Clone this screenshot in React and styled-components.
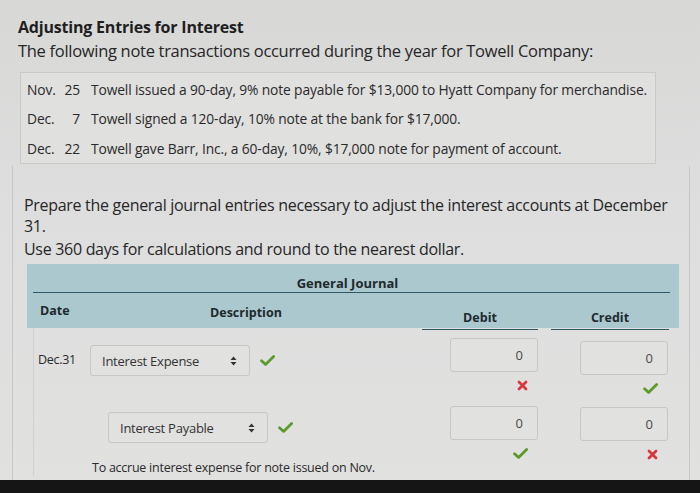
import React from "react";
import styled, { createGlobalStyle } from "styled-components";

const GlobalStyle = createGlobalStyle`
  html, body {
    margin: 0;
    padding: 0;
    background: #dcdcdb;
  }
  body {
    font-family: "Open Sans", "Noto Sans", "Liberation Sans", sans-serif;
    color: #2b2b2b;
  }
`;

const Page = styled.div`
  width: 700px;
  height: 493px;
  overflow: hidden;
  display: flex;
  flex-direction: column;
  background: linear-gradient(180deg, #d8d8d7 0%, #dedede 45%, #e1e1e0 100%);
`;

const Intro = styled.div`
  padding: 17px 0 0 18px;
`;

const Title = styled.h1`
  margin: 0;
  font-size: 16px;
  line-height: 20px;
  font-weight: 700;
  color: #1f1f1f;
  letter-spacing: -0.2px;
`;

const Subtitle = styled.p`
  margin: 3px 0 0;
  font-size: 16.5px;
  line-height: 22px;
  letter-spacing: -0.3px;
  color: #262626;
`;

const NoteBox = styled.div`
  margin: 10px 0 0 2px;
  width: 636px;
  height: 92px;
  border: 1px solid #c9c9c8;
  background: #e0e0df;
  box-sizing: border-box;
  padding-top: 2px;
  display: flex;
  flex-direction: column;
`;

const NoteRow = styled.div`
  display: flex;
  height: 31px;
  align-items: center;
  font-size: 13.8px;
  letter-spacing: -0.13px;
  color: #2a2a2a;
  white-space: nowrap;
`;

const NoteMonth = styled.span`
  width: 32px;
  padding-left: 6px;
`;

const NoteDay = styled.span`
  width: 21px;
  text-align: right;
  margin-right: 11px;
`;

const Panel = styled.div`
  margin: 2px 0 0 12px;
  width: 678px;
  flex: 1;
  min-height: 0;
  overflow: hidden;
  border-left: 1px solid #c6c6c5;
  border-right: 1px solid #c6c6c5;
  box-sizing: border-box;
  display: flex;
  flex-direction: column;
`;

const Question = styled.p`
  margin: 29px 0 0 11px;
  font-size: 16px;
  line-height: 21px;
  letter-spacing: -0.3px;
  color: #262626;
`;

const Hint = styled.p`
  margin: 2px 0 0 11px;
  font-size: 16px;
  line-height: 20px;
  letter-spacing: -0.3px;
  color: #262626;
`;

const JournalHead = styled.div`
  margin: 5px 0 0 14px;
  width: 652px;
  height: 64px;
  background: #abc8cf;
  box-sizing: border-box;
  padding: 10px 9px 0 6px;
  display: flex;
  flex-direction: column;
`;

const JournalTitle = styled.div`
  text-align: center;
  font-size: 13px;
  font-weight: 700;
  line-height: 18px;
  color: #1e2a2c;
  padding-right: 8px;
  border-bottom: 1.5px solid #2d5964;
`;

const ColumnRow = styled.div`
  display: grid;
  grid-template-columns: 56px 333px 116px 131px;
  align-items: end;
  margin-top: 13px;
`;

const ColLabel = styled.div`
  font-size: 12.5px;
  font-weight: 700;
  color: #1e2a2c;
  line-height: 17px;
  padding-left: ${(p) => p.$indent || 0}px;
  text-align: ${(p) => p.$align || "left"};
  border-bottom: ${(p) => (p.$line ? "1.5px solid #2d5964" : "none")};
  margin-left: ${(p) => p.$gap || 0}px;
  padding-bottom: ${(p) => (p.$line ? 3 : 7)}px;
  transform: translateY(${(p) => p.$shift || 0}px);
`;

const Entries = styled.div`
  margin-left: 20px;
  padding-top: 10px;
  display: flex;
  flex-direction: column;
  gap: 11px;
  border-left: 1px solid #d0d0cf;
`;

const EntryRow = styled.div`
  display: grid;
  grid-template-columns: 56px 360px 88px 130px;
  align-items: start;
`;

const DateCell = styled.div`
  font-size: 12.5px;
  letter-spacing: -0.3px;
  padding: 13px 0 0 4px;
  color: #2a2a2a;
`;

const AccountCell = styled.div`
  display: flex;
  align-items: center;
  gap: 10px;
  padding-left: ${(p) => p.$indent || 0}px;
  margin-top: ${(p) => p.$top || 0}px;
`;

const Select = styled.div`
  width: 160px;
  height: 31px;
  box-sizing: border-box;
  border: 1px solid #c6c6c5;
  border-radius: 3px;
  background: #e1e1e0;
  display: flex;
  align-items: center;
  justify-content: space-between;
  padding: 0 12px 0 11px;
  font-size: 13px;
  letter-spacing: -0.25px;
  color: #333;
`;

const AmountCell = styled.div`
  display: flex;
  flex-direction: column;
  align-items: center;
  justify-self: ${(p) => (p.$end ? "end" : "start")};
  width: 88px;
  margin-top: ${(p) => p.$top || 0}px;
`;

const AmountInput = styled.div`
  width: 88px;
  height: 34px;
  box-sizing: border-box;
  border: 1px solid #c6c6c5;
  border-radius: 3px;
  background: #e1e1e0;
  display: flex;
  align-items: center;
  justify-content: flex-end;
  padding-right: 14px;
  font-size: 13px;
  color: #4a4a4a;
`;

const Mark = styled.div`
  align-self: flex-end;
  margin: 6px 10px 0 0;
  height: 14px;
  display: flex;
  align-items: center;
`;

const Memo = styled.div`
  margin-top: -13px;
  padding-left: 58px;
  font-size: 12.5px;
  line-height: 17px;
  letter-spacing: -0.25px;
  color: #2a2a2a;
`;

const BottomBar = styled.div`
  height: 13px;
  flex-shrink: 0;
  background: #151515;
`;

const Check = () => (
  <svg width="15" height="11" viewBox="0 0 15 11">
    <path d="M1.5 5.8 L5.6 9.4 L13.6 1.6" fill="none" stroke="#5c9a2c" strokeWidth="2.8" strokeLinecap="round" strokeLinejoin="round" />
  </svg>
);

const Cross = () => (
  <svg width="11" height="11" viewBox="0 0 11 11">
    <path d="M2 2 L9 9 M9 2 L2 9" fill="none" stroke="#d9363d" strokeWidth="2.8" strokeLinecap="round" />
  </svg>
);

const UpDown = () => (
  <svg width="7" height="10" viewBox="0 0 7 10">
    <path d="M3.5 0.5 L6.5 4 L0.5 4 Z M3.5 9.5 L6.5 6 L0.5 6 Z" fill="#333" />
  </svg>
);

const notes = [
  ["Nov.", "25", "Towell issued a 90-day, 9% note payable for $13,000 to Hyatt Company for merchandise."],
  ["Dec.", "7", "Towell signed a 120-day, 10% note at the bank for $17,000."],
  ["Dec.", "22", "Towell gave Barr, Inc., a 60-day, 10%, $17,000 note for payment of account."],
];

const entries = [
  { date: "Dec.31", account: "Interest Expense", indent: 0, top: 7, debit: "0", credit: "0", debitOk: false, creditOk: true, creditTop: 3 },
  { date: "", account: "Interest Payable", indent: 18, top: 6, debit: "0", credit: "0", debitOk: true, creditOk: false, creditTop: 1 },
];

export default function App() {
  return (
    <>
      <GlobalStyle />
      <Page>
        <Intro>
          <Title>Adjusting Entries for Interest</Title>
          <Subtitle>The following note transactions occurred during the year for Towell Company:</Subtitle>
          <NoteBox>
            {notes.map(([m, d, text]) => (
              <NoteRow key={m + d}>
                <NoteMonth>{m}</NoteMonth>
                <NoteDay>{d}</NoteDay>
                <span>{text}</span>
              </NoteRow>
            ))}
          </NoteBox>
        </Intro>
        <Panel>
          <Question>
            Prepare the general journal entries necessary to adjust the interest accounts at December
            <br />
            31.
          </Question>
          <Hint>Use 360 days for calculations and round to the nearest dollar.</Hint>
          <JournalHead>
            <JournalTitle>General Journal</JournalTitle>
            <ColumnRow>
              <ColLabel $indent={7} $shift={-4}>Date</ColLabel>
              <ColLabel $indent={121} $shift={-2}>Description</ColLabel>
              <ColLabel $line $align="center">Debit</ColLabel>
              <ColLabel $line $align="center" $gap={13}>Credit</ColLabel>
            </ColumnRow>
          </JournalHead>
          <Entries>
            {entries.map((e) => (
              <EntryRow key={e.account}>
                <DateCell>{e.date}</DateCell>
                <AccountCell $indent={e.indent} $top={e.top}>
                  <Select>
                    <span>{e.account}</span>
                    <UpDown />
                  </Select>
                  <Check />
                </AccountCell>
                <AmountCell>
                  <AmountInput>{e.debit}</AmountInput>
                  <Mark>{e.debitOk ? <Check /> : <Cross />}</Mark>
                </AmountCell>
                <AmountCell $end $top={e.creditTop}>
                  <AmountInput>{e.credit}</AmountInput>
                  <Mark>{e.creditOk ? <Check /> : <Cross />}</Mark>
                </AmountCell>
              </EntryRow>
            ))}
            <Memo>To accrue interest expense for note issued on Nov.</Memo>
          </Entries>
        </Panel>
        <BottomBar />
      </Page>
    </>
  );
}
